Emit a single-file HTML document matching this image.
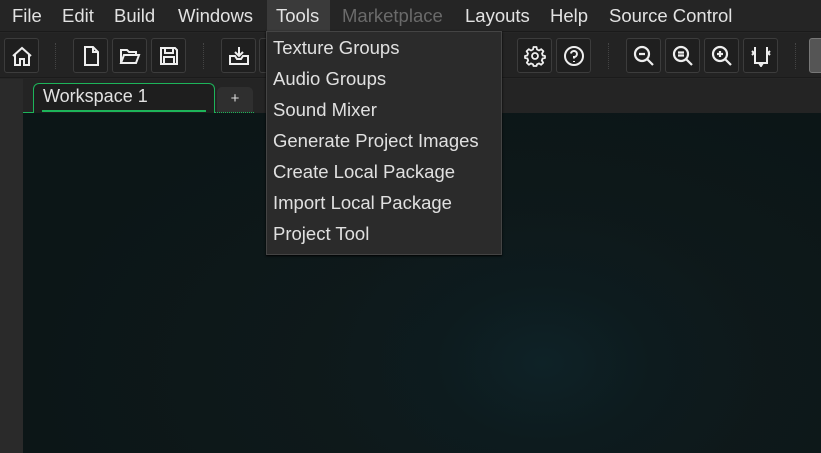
<!DOCTYPE html>
<html><head><style>
*{margin:0;padding:0;box-sizing:border-box}
body{width:821px;height:453px;overflow:hidden;background:#262626;font-family:"Liberation Sans",sans-serif;position:relative}
.mb{position:absolute;top:0;left:0;width:821px;height:32px;background:#252525;border-bottom:1px solid #1a1a1a}
.mb span{position:absolute;top:5px;font-size:18.5px;color:#e2e2e2}
.tb{position:absolute;top:33px;left:0;width:821px;height:45px;background:#232323;border-bottom:1px solid #1b1b1b}
.btn{position:absolute;top:5px;width:35px;height:35px;border:1px solid #3c3c3c;border-radius:3px;background:#1f1f1f}
.btn svg{position:absolute;left:6px;top:6px}
.sep{position:absolute;top:10px;width:1px;height:26px;border-left:1px dotted #444}
.tabs{position:absolute;top:79px;left:23px;width:798px;height:35px;background:#242424}
.left{position:absolute;top:79px;left:0;width:23px;height:374px;background:#2a2a2a}
.canvas{position:absolute;top:113px;left:23px;width:798px;height:340px;background:radial-gradient(ellipse 220px 160px at 520px 250px,#0e2227 0%,#0d1b1e 50%,transparent 100%),radial-gradient(ellipse 500px 300px at 500px 260px,#0f1b1d,#0c1617 100%);background-color:#0c1617}
.menu{position:absolute;top:31px;left:266px;width:236px;height:224px;background:#2b2b2b;border:1px solid #444;box-shadow:0 1px 2px #000}
.menu div{position:absolute;left:6px;font-size:18.5px;color:#e0e0e0}
</style></head><body>
<div class="mb">
<span style="left:12px">File</span><span style="left:62px">Edit</span><span style="left:114px">Build</span><span style="left:178px">Windows</span>
<div style="position:absolute;left:267px;top:0;width:63px;height:31px;background:#3a3a3a"></div>
<span style="left:276px">Tools</span><span style="left:342px;color:#6a6a6a">Marketplace</span><span style="left:465px">Layouts</span><span style="left:550px">Help</span><span style="left:609px">Source Control</span>
</div>
<div class="tb">
<div class="btn" style="left:4px"><svg width="22" height="22" viewBox="0 0 22 22" fill="none" stroke="#eee" stroke-width="2"><path d="M2 11L11 3L20 11M4 9V20H9V14H13V20H18V9"/></svg></div>
<div class="sep" style="left:55px"></div>
<div class="btn" style="left:73px"><svg width="22" height="22" viewBox="0 0 22 22" fill="none" stroke="#eee" stroke-width="2"><path d="M5 2H13L18 7V20H5Z M13 2V7H18"/></svg></div>
<div class="btn" style="left:112px"><svg width="22" height="22" viewBox="0 0 22 22" fill="none" stroke="#eee" stroke-width="2"><path d="M2 18V5H8L10 7H17V10M2 18L5 10H20L17 18Z"/></svg></div>
<div class="btn" style="left:151px"><svg width="22" height="22" viewBox="0 0 22 22" fill="none" stroke="#eee" stroke-width="2"><path d="M3 3H17L19 5V19H3Z M7 3V8H15V3 M6 19V12H16V19"/></svg></div>
<div class="sep" style="left:203px"></div>
<div class="btn" style="left:221px"><svg width="22" height="22" viewBox="0 0 22 22" fill="none" stroke="#eee" stroke-width="2"><path d="M2 11V19H20V11H15L13 14H9L7 11Z M11 2V10M7 7L11 11L15 7"/></svg></div>
<div class="btn" style="left:259px"></div>
<div class="btn" style="left:517px"><svg width="22" height="22" viewBox="0 0 22 22" fill="none" stroke="#eee" stroke-width="1.8" stroke-linejoin="round"><circle cx="11" cy="11" r="3"/><path d="M9.5 2H12.5L13 4.5L15 5.5L17.3 4.2L19.4 6.3L18 8.5L18.7 10.5L21 11V13L18.6 13.5L17.8 15.5L19.2 17.7L17.1 19.8L15 18.4L13 19.3L12.5 21H9.5L9 19.3L7 18.4L4.9 19.8L2.8 17.7L4.2 15.5L3.4 13.5L1 13V11L3.3 10.5L4 8.5L2.6 6.3L4.7 4.2L7 5.5L9 4.5Z"/></svg></div>
<div class="btn" style="left:556px"><svg width="22" height="22" viewBox="0 0 22 22" fill="none" stroke="#eee" stroke-width="2"><circle cx="11" cy="11" r="9"/><path d="M8 8.5A3 3 0 1 1 11 12V13.5M11 16V17"/></svg></div>
<div class="sep" style="left:608px"></div>
<div class="btn" style="left:626px"><svg width="22" height="22" viewBox="0 0 22 22" fill="none" stroke="#eee" stroke-width="2.2"><circle cx="9" cy="9" r="7"/><path d="M14 14L20 20M6 9H12"/></svg></div>
<div class="btn" style="left:665px"><svg width="22" height="22" viewBox="0 0 22 22" fill="none" stroke="#eee" stroke-width="2.2"><circle cx="9" cy="9" r="7"/><path d="M14 14L20 20M6 7.5H12M6 10.5H12"/></svg></div>
<div class="btn" style="left:704px"><svg width="22" height="22" viewBox="0 0 22 22" fill="none" stroke="#eee" stroke-width="2.2"><circle cx="9" cy="9" r="7"/><path d="M14 14L20 20M6 9H12M9 6V12"/></svg></div>
<div class="btn" style="left:743px"><svg width="22" height="22" viewBox="0 0 22 22" fill="none" stroke="#eee" stroke-width="2"><path d="M5 2V14M17 2V14M2 6L4 8L2 10M20 6L18 8L20 10M5 14V18H17V14M9 18L11 21L13 18"/></svg></div>
<div class="sep" style="left:795px"></div>
<div class="btn" style="left:809px;background:#555;border-color:#777"></div>
</div>
<div class="left"></div>
<div class="tabs">
<div style="position:absolute;left:10px;top:4px;width:182px;height:31px;border:1px solid #1db45a;border-bottom:none;border-radius:6px 6px 0 0;background:#1e1e1e"></div>
<div style="position:absolute;left:0;top:33px;width:11px;height:1px;background:#1db45a"></div>
<div style="position:absolute;left:191px;top:33px;width:40px;height:1px;border-top:1px dotted #1db45a"></div>
<div style="position:absolute;left:20px;top:7px;font-size:18px;color:#e2e2e2">Workspace 1</div>
<div style="position:absolute;left:19px;top:31px;width:164px;height:2px;background:#1db45a"></div>
<div style="position:absolute;left:194px;top:8px;width:36px;height:25px;background:#2f2f2f;border-radius:5px 5px 0 0;color:#ddd;font-size:15px;text-align:center;line-height:24px">+</div>
</div>
<div class="canvas"></div>
<div class="menu">
<div style="top:5px">Texture Groups</div>
<div style="top:36px">Audio Groups</div>
<div style="top:67px">Sound Mixer</div>
<div style="top:98px">Generate Project Images</div>
<div style="top:129px">Create Local Package</div>
<div style="top:160px">Import Local Package</div>
<div style="top:191px">Project Tool</div>
</div>
</body></html>
